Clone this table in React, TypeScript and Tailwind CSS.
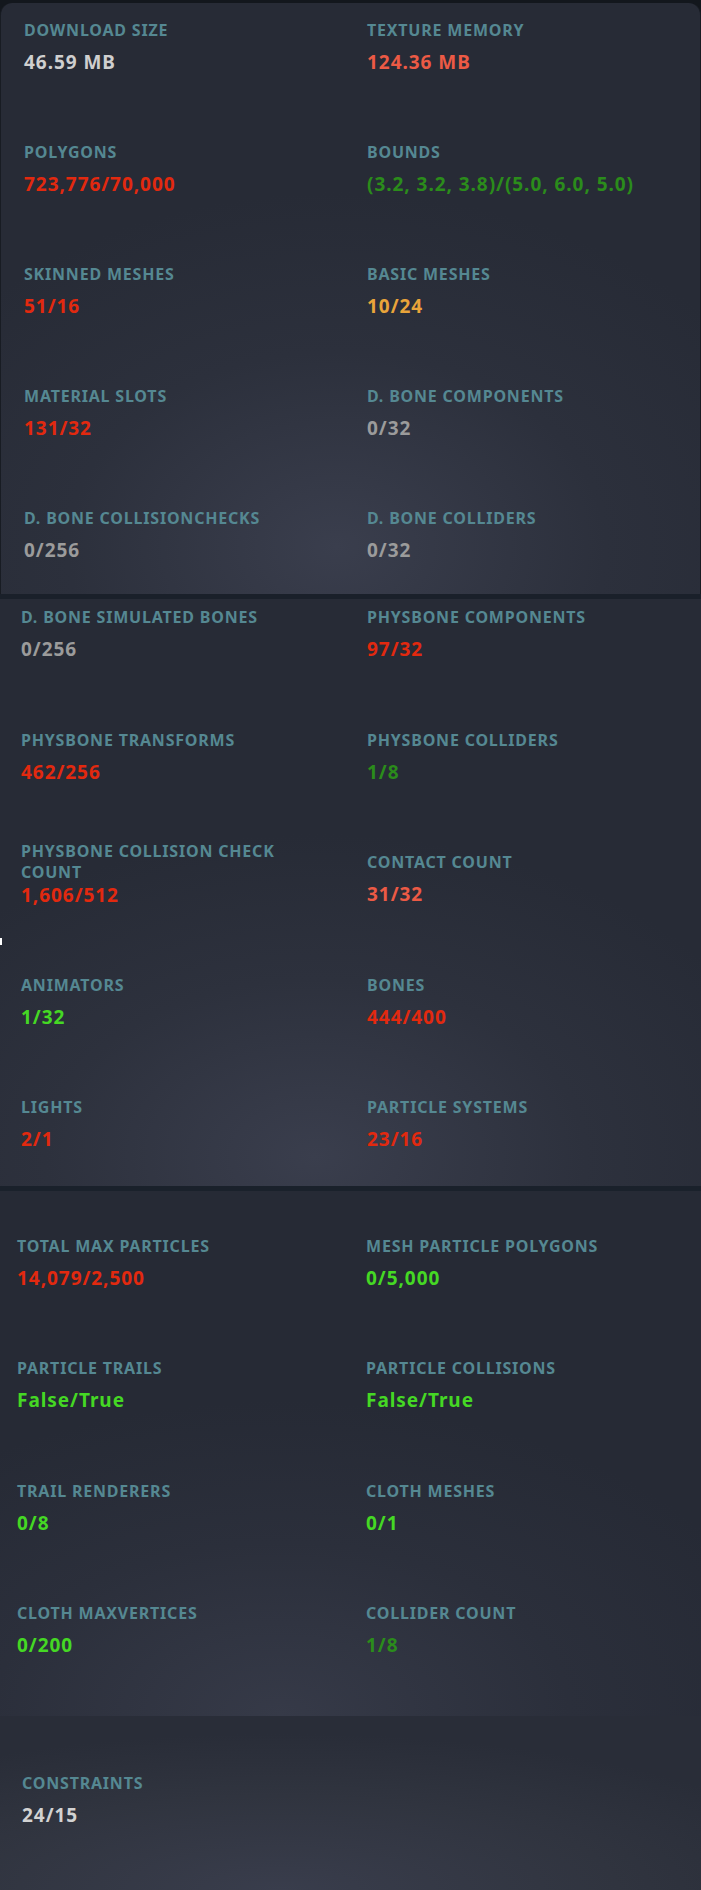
import React from "react";

type Stat = {
  label: string;
  value: string;
  color: string;
  tight?: boolean;
};

const panelOne: Stat[] = [
  { label: "Download Size", value: "46.59 MB", color: "text-[#cfcfcf]" },
  { label: "Texture Memory", value: "124.36 MB", color: "text-[#ec5a45]" },
  { label: "Polygons", value: "723,776/70,000", color: "text-[#e2290f]" },
  { label: "Bounds", value: "(3.2, 3.2, 3.8)/(5.0, 6.0, 5.0)", color: "text-[#2b8c1b]" },
  { label: "Skinned Meshes", value: "51/16", color: "text-[#e2290f]" },
  { label: "Basic Meshes", value: "10/24", color: "text-[#e9a43a]" },
  { label: "Material Slots", value: "131/32", color: "text-[#e2290f]" },
  { label: "D. Bone Components", value: "0/32", color: "text-[#9b9b9b]" },
  { label: "D. Bone CollisionChecks", value: "0/256", color: "text-[#9b9b9b]" },
  { label: "D. Bone Colliders", value: "0/32", color: "text-[#9b9b9b]" },
];

const panelTwo: Stat[] = [
  { label: "D. Bone Simulated Bones", value: "0/256", color: "text-[#9b9b9b]" },
  { label: "PhysBone Components", value: "97/32", color: "text-[#e2290f]" },
  { label: "PhysBone Transforms", value: "462/256", color: "text-[#e2290f]" },
  { label: "PhysBone Colliders", value: "1/8", color: "text-[#2b8c1b]" },
  { label: "PhysBone Collision Check Count", value: "1,606/512", color: "text-[#e2290f]", tight: true },
  { label: "Contact Count", value: "31/32", color: "text-[#ec5a45]" },
  { label: "Animators", value: "1/32", color: "text-[#45d824]" },
  { label: "Bones", value: "444/400", color: "text-[#e2290f]" },
  { label: "Lights", value: "2/1", color: "text-[#e2290f]" },
  { label: "Particle Systems", value: "23/16", color: "text-[#e2290f]" },
];

const panelThree: Stat[] = [
  { label: "Total Max Particles", value: "14,079/2,500", color: "text-[#e2290f]" },
  { label: "Mesh Particle Polygons", value: "0/5,000", color: "text-[#45d824]" },
  { label: "Particle Trails", value: "False/True", color: "text-[#45d824]" },
  { label: "Particle Collisions", value: "False/True", color: "text-[#45d824]" },
  { label: "Trail Renderers", value: "0/8", color: "text-[#45d824]" },
  { label: "Cloth Meshes", value: "0/1", color: "text-[#45d824]" },
  { label: "Cloth MaxVertices", value: "0/200", color: "text-[#45d824]" },
  { label: "Collider Count", value: "1/8", color: "text-[#2b8c1b]" },
];

const StatCell: React.FC<{ stat: Stat }> = ({ stat }) => {
  return (
    <div className="h-[122px] pr-4">
      <div
        className={`text-[16px] font-bold uppercase tracking-[0.05em] text-[#558892] max-w-[290px] ${
          stat.tight ? "-mt-[11px] leading-[21px]" : "leading-[20px]"
        }`}
      >
        {stat.label}
      </div>
      <div
        className={`text-[19px] leading-[24px] font-bold tracking-[0.05em] ${stat.color} ${
          stat.tight ? "mt-0" : "mt-[10px]"
        }`}
      >
        {stat.value}
      </div>
    </div>
  );
};

export default function App() {
  return (
    <div
      className="w-[701px] h-[1890px] overflow-hidden bg-[#13171d]"
      style={{ fontFamily: '"Noto Sans", "Open Sans", sans-serif' }}
    >
      {/* top panel */}
      <div className="pt-[3px]">
        <div className="h-[591px] overflow-hidden rounded-t-[12px] border-x border-[#181c23] bg-[radial-gradient(ellipse_70%_60%_at_48%_92%,#3a3e4d_0%,#2c303c_55%,#272b36_100%)] pt-[17px] pl-[23px]">
          <div className="grid grid-cols-[343px_1fr] auto-rows-[122px]">
            {panelOne.map((s) => (
              <StatCell key={s.label} stat={s} />
            ))}
          </div>
        </div>
      </div>

      <div className="h-[5px] bg-[#1a202a]" />

      {/* middle panel */}
      <div className="relative h-[587px] overflow-hidden bg-[radial-gradient(ellipse_70%_55%_at_45%_95%,#3a3e4d_0%,#2d313d_55%,#272b36_100%)] pt-[8px] pl-[21px]">
        <div className="grid grid-cols-[346px_1fr] auto-rows-[122.5px]">
          {panelTwo.map((s) => (
            <StatCell key={s.label} stat={s} />
          ))}
        </div>
        <span className="absolute left-0 top-[339px] h-[7px] w-[2px] bg-white" />
      </div>

      <div className="h-[5px] bg-[#1a212b]" />

      {/* lower panel */}
      <div className="h-[525px] overflow-hidden bg-[radial-gradient(ellipse_75%_60%_at_40%_100%,#363a48_0%,#2b2f3b_55%,#262a35_100%)] pt-[45px] pl-[17px]">
        <div className="grid grid-cols-[349px_1fr] auto-rows-[122.3px]">
          {panelThree.map((s) => (
            <StatCell key={s.label} stat={s} />
          ))}
        </div>
      </div>

      {/* constraints */}
      <div className="h-[174px] bg-[radial-gradient(ellipse_80%_90%_at_40%_100%,#393d4c_0%,#30343f_60%,#292d38_100%)] pt-[57px] pl-[22px]">
        <StatCell stat={{ label: "Constraints", value: "24/15", color: "text-[#d2d2d2]" }} />
      </div>
    </div>
  );
}
